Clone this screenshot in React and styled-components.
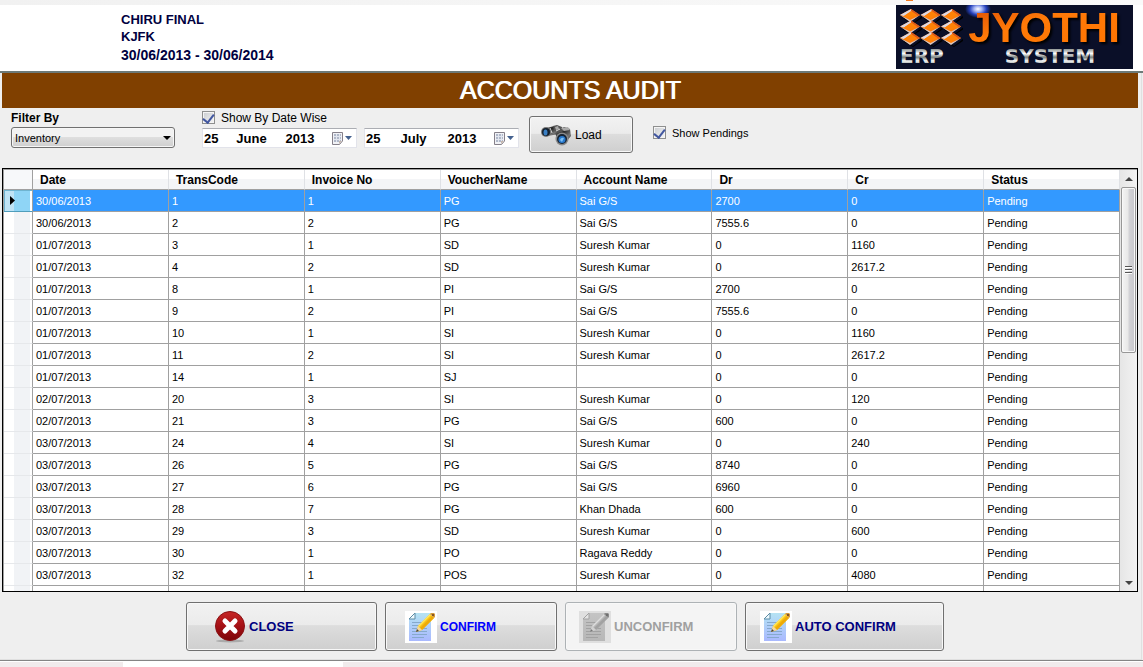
import React from 'react';
import styled, { createGlobalStyle, css } from 'styled-components';

const GlobalStyle = createGlobalStyle`
  * { box-sizing: border-box; }
  body {
    margin: 0;
    background: #efefef;
    color: #000;
    font-family: "Liberation Sans", Arial, sans-serif;
    font-size: 11px;
  }
  button, input, select { font-family: inherit; margin: 0; }
`;

const Window = styled.div`
  display: flex;
  flex-direction: column;
  height: 100vh;
  min-height: 320px;
`;

const TopStrip = styled.div`
  flex: none;
  height: 5px;
  padding-left: 906px;
  background: linear-gradient(to right, #f1f1f1, #fafafa);
`;

const TabMark = styled.div`
  width: 7px;
  height: 1px;
  background: #f47a20;
`;

const Masthead = styled.header`
  flex: none;
  display: flex;
  justify-content: space-between;
  height: 68px;
  padding: 0 10px 0 121px;
  background: #fff;
  border-bottom: 2px solid #6d7a78;
`;

const Company = styled.div`
  padding-top: 6px;
  color: #000040;
  font-size: 13px;
  font-weight: bold;
  line-height: 17px;
`;

const Period = styled.div`
  padding-top: 2px;
  font-size: 14px;
`;

const Panel = styled.main`
  flex: 1;
  min-height: 0;
  display: flex;
  flex-direction: column;
  margin-right: 1px;
  padding: 0 3px 0 2px;
  border-right: 1px solid #e0e0e0;
  border-bottom: 1px solid #e0e0e0;
`;

const Title = styled.h1`
  flex: none;
  margin: 0;
  background: #804000;
  color: #fff;
  font-size: 25px;
  font-weight: normal;
  line-height: 35px;
  text-align: center;
  text-shadow: 1px 0 #fff;
`;

const Toolbar = styled.form`
  flex: none;
  display: flex;
  align-items: flex-start;
  height: 60px;
  padding: 2px 9px 0;
`;

const Field = styled.div`
  display: flex;
  flex-direction: column;
  width: 164px;
  margin-right: 27px;
`;

const FieldLabel = styled.label`
  font-size: 12px;
  font-weight: bold;
  line-height: 17px;
`;

const SelectBox = styled.div`
  position: relative;
  display: flex;
  svg { position: absolute; right: 4px; top: 9px; pointer-events: none; }
`;

const Select = styled.select`
  appearance: none;
  width: 100%;
  height: 21px;
  padding: 0 20px 0 3px;
  border: 1px solid #707070;
  border-radius: 3px;
  background: linear-gradient(#f2f2f2 0 45%, #dedede 50%, #cfcfcf);
  box-shadow: inset 0 0 0 1px #f6f6f6;
  color: #000;
  font-size: 11px;
`;

const DateGroup = styled.div`
  width: 317px;
  margin-right: 10px;
`;

const DateRow = styled.div`
  display: flex;
  gap: 7px;
  padding-top: 3px;
`;

const CheckLabel = styled.label`
  display: flex;
  align-items: center;
  gap: 6px;
  height: 15px;
  font-size: ${(p) => (p.$large ? '12px' : '11px')};
`;

const CheckBox = styled.input.attrs({ type: 'checkbox' })`
  appearance: none;
  display: flex;
  justify-content: center;
  flex: none;
  width: 13px;
  height: 13px;
  border: 1px solid #8e8f8f;
  background: linear-gradient(135deg, #c9ccd0, #f6f6f6);
  box-shadow: inset 0 0 0 1px #f4f4f4;
  &:checked::before {
    content: "";
    flex: none;
    width: 5px;
    height: 9px;
    border: solid #4257a0;
    border-width: 0 2px 2px 0;
    transform: rotate(38deg);
  }
`;

const DateBox = styled.div`
  display: flex;
  align-items: center;
  width: 155px;
  height: 20px;
  padding-left: 1px;
  background: #fff;
  border: 1px solid #e2e3ea;
  border-top-color: #abadb3;
`;

const DatePart = styled.input.attrs({ type: 'text' })`
  width: ${(p) => p.$width};
  padding: 0;
  border: 0;
  background: transparent;
  color: #000;
  font-size: 13px;
  font-weight: bold;
  text-align: ${(p) => p.$align || 'left'};
`;

const CalendarButton = styled.button`
  display: flex;
  margin-left: auto;
  padding: 0 4px 0 0;
  border: 0;
  background: none;
`;

const raised = css`
  border: 1px solid #707070;
  border-radius: 3px;
  background: linear-gradient(#f2f2f2, #ebebeb 47%, #dddddd 48%, #cfcfcf);
  box-shadow: inset 0 0 0 1px #f8f8f8;
`;

const LoadButton = styled.button`
  ${raised}
  display: flex;
  align-items: center;
  gap: 3px;
  width: 104px;
  height: 37px;
  margin: 6px 20px 0 0;
  padding: 0 10px;
  color: #000;
  font-size: 12px;
`;

const PendingCheck = styled.div`
  padding-top: 15px;
`;

const Grid = styled.section`
  flex: 1;
  min-height: 0;
  display: flex;
  border: 1px solid #000;
  background: #fff;
  overflow: hidden;
`;

const Viewport = styled.div`
  flex: 1;
  min-width: 0;
  overflow: hidden;
  border-left: 1px solid #a0a0a0;
  border-top: 1px solid #a0a0a0;
`;

const Table = styled.table`
  width: 100%;
  table-layout: fixed;
  border-collapse: separate;
  border-spacing: 0;
`;

const MarkerHead = styled.th`
  width: 29px;
  padding: 0;
  background: #f7f8fa;
  border-right: 1px solid #a0a0a0;
  border-bottom: 1px solid #a0a0a0;
`;

const HeadCell = styled.th`
  height: 20px;
  padding: 2px 7px 0;
  background: linear-gradient(#fff 45%, #f4f5f7 50%);
  border-right: 1px solid #dfe1e5;
  border-bottom: 1px solid #a0a0a0;
  font-size: 12px;
  line-height: 17px;
  text-align: left;
`;

const Row = styled.tr`
  background: ${(p) => (p.$selected ? '#3399ff' : '#fff')};
  color: ${(p) => (p.$selected ? '#fff' : '#000')};
`;

const MarkerCell = styled.td`
  height: 22px;
  padding: 0 0 0 6px;
  border-right: 1px solid #a0a0a0;
  border-bottom: 1px solid #e6e8eb;
  background: linear-gradient(to right, #fff 10px, #f1f3f6 10px, #f1f3f6 26px, #fff 26px);
  svg { display: block; }
  ${(p) => p.$selected && css`
    border-bottom-color: #4f9dbb;
    background: linear-gradient(to right, #bfe3f5 10px, #8fd5f6 10px, #8fd5f6 26px, #fff 26px);
    box-shadow: inset 1px 1px #6fb4d0;
  `}
`;

const Cell = styled.td`
  height: 22px;
  padding: 2px 3px 0;
  border-right: 1px solid #a0a0a0;
  border-bottom: 1px solid #a0a0a0;
  line-height: 19px;
  white-space: nowrap;
  overflow: hidden;
`;

const ScrollBar = styled.div`
  flex: none;
  display: flex;
  flex-direction: column;
  width: 17px;
  padding: 0 1px;
  border-top: 1px solid #a0a0a0;
  background: linear-gradient(to right, #e6e6e6, #f2f2f2);
`;

const ScrollArrow = styled.button`
  flex: none;
  display: grid;
  place-items: center;
  height: 17px;
  padding: 0;
  border: 0;
  background: none;
`;

const Track = styled.div`
  flex: 1;
`;

const Thumb = styled.div`
  display: flex;
  flex-direction: column;
  align-items: center;
  justify-content: center;
  gap: 1px;
  height: 43%;
  border: 1px solid #979797;
  border-radius: 2px;
  background: linear-gradient(to right, #f4f4f4, #e8e8e8 45%, #d2d2d6 55%, #c8c8cc);
  box-shadow: inset 0 0 0 1px #f8f8f8;
`;

const Grip = styled.span`
  width: 7px;
  height: 2px;
  border-top: 1px solid #555;
  background: #fff;
`;

const Actions = styled.div`
  flex: none;
  display: flex;
  justify-content: center;
  gap: 8px;
  padding: 10px 10px 8px 0;
`;

const ActionButton = styled.button`
  ${raised}
  display: flex;
  align-items: center;
  gap: 3px;
  width: ${(p) => p.$width};
  height: 49px;
  padding: 0 0 0 ${(p) => p.$inset};
  color: ${(p) => p.$color || '#000080'};
  font-size: ${(p) => (p.$small ? '12px' : '13px')};
  font-weight: bold;
  &:disabled {
    border-color: #adb2b5;
    background: #f4f4f4;
    color: #a0a0a0;
  }
`;

const StatusBar = styled.footer`
  flex: none;
  height: 7px;
  padding-left: 123px;
  border-top: 1px solid #858585;
  background: #f1ebec;
  box-shadow: inset 0 1px #fff;
`;

const StatusTab = styled.div`
  width: 220px;
  height: 6px;
  background: #fff;
`;

const LogoArt = styled.svg`
  flex: none;
  .name { filter: drop-shadow(2px 2px 1px #000); }
`;

function Triangle({ width = 8, color = '#000', up, right }) {
  if (right) {
    return <svg width="5" height="9" viewBox="0 0 5 9" aria-hidden="true"><path d="M0 0 5 4.5 0 9z" fill={color} /></svg>;
  }
  const h = width / 2;
  return (
    <svg width={width} height={h} viewBox={`0 0 ${width} ${h}`} aria-hidden="true">
      <path d={up ? `M0 ${h}H${width}L${h} 0z` : `M0 0H${width}L${h} ${h}z`} fill={color} />
    </svg>
  );
}

function Logo() {
  const tiles = [];
  for (let r = 0; r < 3; r += 1) {
    for (let c = 0; c < 3; c += 1) {
      tiles.push(
        <g key={`${r}-${c}`} transform={`translate(${4 + c * 20.5} ${4 + r * 11.5})`}>
          <path d="M3 8 13 14 22 7 22 9 13 15 4 10z" fill="#000" />
          <path d="M0 6 11 0 20 6 10 12z" fill="#ff7b0a" />
          <path d="M0 6 11 0 12 2 4 7z" fill="#ddd8e2" />
          <path d="M11 0 20 6 18 7 11 2z" fill="#d9571c" />
          <path d="M0 6 10 11 20 6 10 13z" fill="#d9c6c0" />
          <path d="M4 7 11 2 17 6 10 10z" fill="#ff8206" />
        </g>,
      );
    }
  }
  return (
    <LogoArt width="237" height="64" viewBox="0 0 237 64" role="img" aria-label="Jyothi ERP System">
      <defs>
        <linearGradient id="flame" x1="0" y1="0" x2="1" y2="1">
          <stop offset="0" stopColor="#d84a05" />
          <stop offset="0.4" stopColor="#ff7a08" />
          <stop offset="1" stopColor="#ff7400" />
        </linearGradient>
        <linearGradient id="steel" x1="0" y1="0" x2="0" y2="1">
          <stop offset="0.2" stopColor="#8a918f" />
          <stop offset="0.4" stopColor="#fff" />
          <stop offset="0.55" stopColor="#7b8280" />
          <stop offset="0.7" stopColor="#f4f6f5" />
          <stop offset="0.85" stopColor="#9aa09e" />
        </linearGradient>
        <radialGradient id="glow">
          <stop offset="0" stopColor="#fff" />
          <stop offset="0.3" stopColor="#a5b4f4" />
          <stop offset="0.65" stopColor="#2540ba" />
          <stop offset="1" stopColor="#0a0f28" />
        </radialGradient>
      </defs>
      <rect width="237" height="64" fill="#0a0f28" />
      {tiles}
      <ellipse cx="82" cy="4" rx="13" ry="9" fill="url(#glow)" />
      <text className="name" x="148" y="37" fontFamily='"Liberation Sans", Arial, sans-serif' fontSize="42" fontWeight="bold" textAnchor="middle" fill="url(#flame)">JYOTHI</text>
      <g fontFamily='"DejaVu Sans", sans-serif' fontWeight="bold" fontSize="20" fill="url(#steel)">
        <text x="4" y="58">ERP</text>
        <text x="154" y="58" textAnchor="middle">SYSTEM</text>
      </g>
    </LogoArt>
  );
}

function Binoculars() {
  return (
    <svg width="32" height="22" viewBox="0 0 32 22" aria-hidden="true">
      <defs>
        <linearGradient id="barrel" x1="0" y1="0" x2="1" y2="1">
          <stop offset="0" stopColor="#999" />
          <stop offset="0.4" stopColor="#222" />
          <stop offset="0.7" stopColor="#777" />
          <stop offset="1" stopColor="#111" />
        </linearGradient>
      </defs>
      <path d="M3 5 14 2 19 4 18 10 8 12z" fill="url(#barrel)" />
      <path d="M15 9 24 3 30 5 31 12 25 19 17 14z" fill="url(#barrel)" />
      <path d="M13 2 17 1 22 3 24 7 18 9 14 6z" fill="#555" />
      <path d="M15 3 18 2 19 5 16 6zM21 4 28 3 30 6 24 7z" fill="#aaa" />
      <path d="M16 7 20 5M10 4 12 9" stroke="#ddd" />
      <ellipse cx="6" cy="8" rx="5" ry="5" fill="#777" />
      <ellipse cx="6" cy="8" rx="4" ry="4" fill="#15202c" />
      <ellipse cx="5.500" cy="8.500" rx="2" ry="3" fill="#3a7fc4" />
      <circle cx="22" cy="15" r="6.500" fill="#8a8a8a" />
      <circle cx="22" cy="15" r="5" fill="#162434" />
      <circle cx="22" cy="15.500" r="3.500" fill="#2878cc" />
      <path d="M20 16a3 3 0 0 1 4-2l-2 4z" fill="#7dc0f5" />
    </svg>
  );
}

function CloseIcon() {
  return (
    <svg width="32" height="32" viewBox="0 0 32 32" aria-hidden="true">
      <defs>
        <linearGradient id="red" x1="0" y1="0" x2="0" y2="1">
          <stop offset="0" stopColor="#c62626" />
          <stop offset="0.5" stopColor="#a51015" />
          <stop offset="1" stopColor="#7c0609" />
        </linearGradient>
      </defs>
      <ellipse cx="16" cy="30" rx="14" ry="1.500" fill="#aaa" />
      <circle cx="16" cy="15" r="14.500" fill="url(#red)" stroke="#8a1114" />
      <path d="m11 10 10 10M21 10 11 20" stroke="#fff" strokeWidth="5" strokeLinecap="round" />
    </svg>
  );
}

function NoteIcon({ muted }) {
  const id = muted ? 'paper-muted' : 'paper';
  return (
    <svg width="32" height="32" viewBox="0 0 32 32" aria-hidden="true">
      <defs>
        <linearGradient id={id} x1="0" y1="0" x2="0" y2="1">
          <stop offset="0" stopColor={muted ? '#c4c4c4' : '#b5e3f3'} />
          <stop offset="1" stopColor={muted ? '#b7b7b7' : '#a9b9ff'} />
        </linearGradient>
      </defs>
      <rect width="32" height="32" fill={muted ? '#dfdfdf' : '#fff'} />
      <path d="M10 2H26V30H4V8z" fill={`url(#${id})`} />
      <path d="M4 8 10 2V8z" fill={muted ? '#e4e4e4' : '#eefaff'} stroke={muted ? '#a2a2a2' : '#5d8ca5'} />
      <path d="M7 11.500H20M7 14.500H17M7 17.500H22M7 20.500H22M7 23.500H22M7 26.500H19" stroke={muted ? '#a2a2a2' : '#86a9cc'} />
      <path d="M11 21 13 15 25 3 29 7 17 19z" fill={muted ? '#b8b8b8' : '#fac514'} />
      <path d="M15 17 27 5 29 7 17 19z" fill={muted ? '#a2a2a2' : '#eeaa08'} />
      <path d="m13 15 12-12 1 1-12 12z" fill={muted ? '#ddd' : '#ffe65b'} />
      <path d="m11 21 2-6 4 4z" fill={muted ? '#d1d1d1' : '#f4d7a0'} />
      <path d="m11 21 1-3 2 2z" fill={muted ? '#777' : '#444'} />
      <path d="m25 3 1-1h3l1 1v3l-1 1z" fill={muted ? '#8a8a8a' : '#d69a3a'} />
      <circle cx="28" cy="4" r="1" fill={muted ? '#666' : '#653e24'} />
    </svg>
  );
}

function CalendarIcon() {
  return (
    <svg width="21" height="14" viewBox="0 0 21 14" aria-hidden="true">
      <path d="M1.500 1.500H11.500V10L8.500 13.500H1.500z" fill="#f1f2f6" stroke="#85808a" />
      <path d="M3 3h7v8H3z" fill="#b0b8c9" />
      <path d="M3 5.500h7M3 8.500h7M5.500 3v8M8.500 3v8" stroke="#e2e6ef" />
      <path d="M8 13V10H11z" fill="#c6b7ad" />
      <path d="M14 5H21L17.500 9z" fill="#44618f" />
    </svg>
  );
}

function DatePicker({ label, day, month, year }) {
  return (
    <DateBox role="group" aria-label={label}>
      <DatePart aria-label={`${label} day`} defaultValue={day} $width="26px" />
      <DatePart aria-label={`${label} month`} defaultValue={month} $width="43px" $align="center" />
      <DatePart aria-label={`${label} year`} defaultValue={year} $width="54px" $align="center" />
      <CalendarButton type="button" aria-label={`${label} calendar`}><CalendarIcon /></CalendarButton>
    </DateBox>
  );
}

const columns = ['Date', 'TransCode', 'Invoice No', 'VoucherName', 'Account Name', 'Dr', 'Cr', 'Status'];

const entries = [
  ['30/06/2013', '1', '1', 'PG', 'Sai G/S', '2700', '0'],
  ['30/06/2013', '2', '2', 'PG', 'Sai G/S', '7555.6', '0'],
  ['01/07/2013', '3', '1', 'SD', 'Suresh Kumar', '0', '1160'],
  ['01/07/2013', '4', '2', 'SD', 'Suresh Kumar', '0', '2617.2'],
  ['01/07/2013', '8', '1', 'PI', 'Sai G/S', '2700', '0'],
  ['01/07/2013', '9', '2', 'PI', 'Sai G/S', '7555.6', '0'],
  ['01/07/2013', '10', '1', 'SI', 'Suresh Kumar', '0', '1160'],
  ['01/07/2013', '11', '2', 'SI', 'Suresh Kumar', '0', '2617.2'],
  ['01/07/2013', '14', '1', 'SJ', '', '0', '0'],
  ['02/07/2013', '20', '3', 'SI', 'Suresh Kumar', '0', '120'],
  ['02/07/2013', '21', '3', 'PG', 'Sai G/S', '600', '0'],
  ['03/07/2013', '24', '4', 'SI', 'Suresh Kumar', '0', '240'],
  ['03/07/2013', '26', '5', 'PG', 'Sai G/S', '8740', '0'],
  ['03/07/2013', '27', '6', 'PG', 'Sai G/S', '6960', '0'],
  ['03/07/2013', '28', '7', 'PG', 'Khan Dhada', '600', '0'],
  ['03/07/2013', '29', '3', 'SD', 'Suresh Kumar', '0', '600'],
  ['03/07/2013', '30', '1', 'PO', 'Ragava Reddy', '0', '0'],
  ['03/07/2013', '32', '1', 'POS', 'Suresh Kumar', '0', '4080'],
];

export default function App() {
  return (
    <Window>
      <GlobalStyle />
      <TopStrip><TabMark /></TopStrip>
      <Masthead>
        <Company>
          <div>CHIRU FINAL</div>
          <div>KJFK</div>
          <Period>30/06/2013 - 30/06/2014</Period>
        </Company>
        <Logo />
      </Masthead>
      <Panel>
        <Title>ACCOUNTS AUDIT</Title>
        <Toolbar onSubmit={(e) => e.preventDefault()}>
          <Field>
            <FieldLabel htmlFor="filter">Filter By</FieldLabel>
            <SelectBox>
              <Select id="filter" defaultValue="Inventory">
                <option>Inventory</option>
              </Select>
              <Triangle />
            </SelectBox>
          </Field>
          <DateGroup>
            <CheckLabel $large>
              <CheckBox defaultChecked />
              Show By Date Wise
            </CheckLabel>
            <DateRow>
              <DatePicker label="From" day="25" month="June" year="2013" />
              <DatePicker label="To" day="25" month="July" year="2013" />
            </DateRow>
          </DateGroup>
          <LoadButton type="submit"><Binoculars />Load</LoadButton>
          <PendingCheck>
            <CheckLabel>
              <CheckBox defaultChecked />
              Show Pendings
            </CheckLabel>
          </PendingCheck>
        </Toolbar>
        <Grid>
          <Viewport>
            <Table>
              <thead>
                <tr>
                  <MarkerHead />
                  {columns.map((c) => <HeadCell key={c} scope="col">{c}</HeadCell>)}
                </tr>
              </thead>
              <tbody>
                {entries.map((entry, i) => (
                  <Row key={entry[1]} $selected={i === 0}>
                    <MarkerCell $selected={i === 0}>{i === 0 && <Triangle right />}</MarkerCell>
                    {entry.map((value, j) => <Cell key={columns[j]}>{value}</Cell>)}
                    <Cell>Pending</Cell>
                  </Row>
                ))}
                <Row>
                  <MarkerCell />
                  {columns.map((c) => <Cell key={c} />)}
                </Row>
              </tbody>
            </Table>
          </Viewport>
          <ScrollBar>
            <ScrollArrow type="button" aria-label="Scroll up"><Triangle up color="#444" /></ScrollArrow>
            <Track>
              <Thumb><Grip /><Grip /><Grip /></Thumb>
            </Track>
            <ScrollArrow type="button" aria-label="Scroll down"><Triangle color="#444" /></ScrollArrow>
          </ScrollBar>
        </Grid>
        <Actions>
          <ActionButton type="button" $width="191px" $inset="27px"><CloseIcon />CLOSE</ActionButton>
          <ActionButton type="button" $width="172px" $inset="19px" $color="#0000ff" $small><NoteIcon />CONFIRM</ActionButton>
          <ActionButton type="button" $width="172px" $inset="13px" disabled><NoteIcon muted />UNCONFIRM</ActionButton>
          <ActionButton type="button" $width="199px" $inset="14px"><NoteIcon />AUTO CONFIRM</ActionButton>
        </Actions>
      </Panel>
      <StatusBar><StatusTab /></StatusBar>
    </Window>
  );
}
